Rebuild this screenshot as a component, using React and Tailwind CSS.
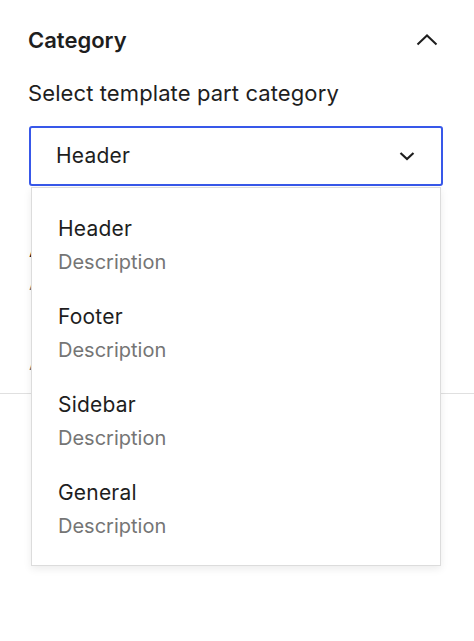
import React from "react";

const options = ["Header", "Footer", "Sidebar", "General"];

const ChevronUp = () => (
  <svg width="24" height="24" viewBox="0 0 24 24" fill="none">
    <path d="M2.5 16.5L12 7.5l9.5 9" stroke="#1e1e1e" strokeWidth="2" />
  </svg>
);

const ChevronDown = () => (
  <svg width="18" height="18" viewBox="0 0 18 18" fill="none">
    <path d="M2.5 6l6.5 6 6.5-6" stroke="#1e1e1e" strokeWidth="2.2" />
  </svg>
);

export default function App() {
  return (
    <div className="relative w-full h-[641px] bg-white text-[#1e1e1e] font-['Inter',sans-serif]">
      <div className="pl-[29px] pr-[31px] pt-[26px]">
        <div className="flex items-center justify-between pr-[4px]">
          <h2 className="text-[22px] leading-[28px] font-semibold -ml-px">Category</h2>
          <ChevronUp />
        </div>
        <p className="mt-[25px] text-[22px] leading-[28px] tracking-[0.1px] -ml-px">Select template part category</p>
        <div className="mt-[19px] h-[60px] flex items-center justify-between border-2 border-[#3858e9] rounded-[3px] pl-[25px] pr-[25px]">
          <span className="text-[21px] leading-[28px] tracking-[0.2px]">Header</span>
          <ChevronDown />
        </div>
        <div className="mt-[50px] text-[20px] leading-[28px] text-[#1e1e1e]">
          <p>Area</p>
          <p className="mt-[5px] text-[#757575]">Area description</p>
          <p className="mt-[52px] text-[#757575]">Advanced</p>
        </div>
      </div>
      <div className="mt-[16px] border-t border-[#e0e0e0]" />

      <div className="absolute left-[31px] right-[33px] top-[187px] bg-white border border-[#dcdcdc] shadow-[0_3px_8px_rgba(0,0,0,0.08)] pl-[26px] pt-[27px] pb-[25px] flex flex-col gap-[27px]">
        {options.map((name) => (
          <div key={name} className="flex flex-col gap-[5px]">
            <span className="text-[21px] leading-[28px] tracking-[0.2px] text-[#1e1e1e]">{name}</span>
            <span className="text-[20px] leading-[28px] text-[#757575]">Description</span>
          </div>
        ))}
      </div>
    </div>
  );
}
